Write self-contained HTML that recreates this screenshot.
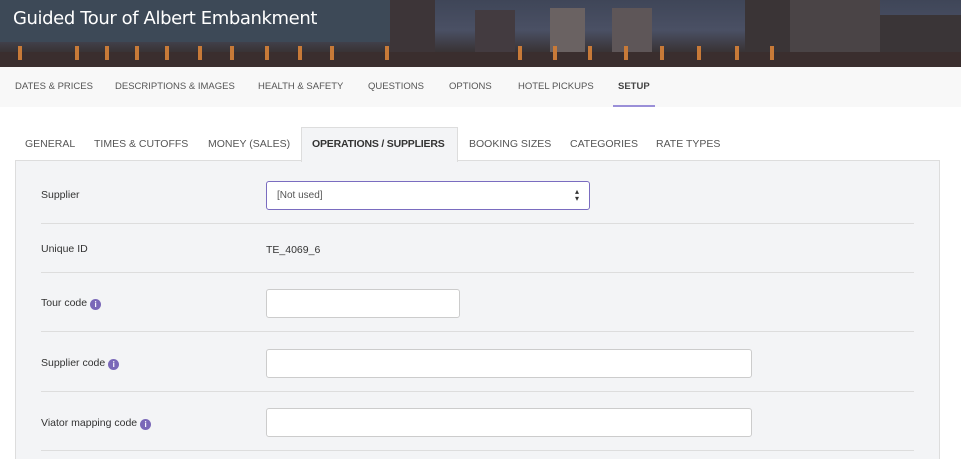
<!DOCTYPE html>
<html style="overflow:hidden;height:459px"><head><style>
*{margin:0;padding:0;box-sizing:border-box}
body{width:961px;height:459px;overflow:hidden;background:#fff;font-family:"Liberation Sans",sans-serif;position:relative}
.banner{position:absolute;left:0;top:0;width:961px;height:67px;background:linear-gradient(180deg,#3f4658 0%,#4a5064 45%,#3a3538 75%,#2c2426 100%)}
.bld{position:absolute;background:#4a4448}
.lamp{position:absolute;width:4px;height:14px;background:#c87a38;top:46px}
.title{position:absolute;left:0;top:0;width:390px;height:42px;background:#3d4957;color:#fff;font-size:18px;padding:8px 0 0 13px;font-family:"DejaVu Sans","Liberation Sans",sans-serif;letter-spacing:-0.4px}
.nav{position:absolute;top:67px;left:0;width:961px;height:40px;background:#f8f8f8;font-size:9.5px;color:#555}
.nav span{position:absolute;top:14px}
.sub{position:absolute;font-size:10.5px;color:#555}
.panel{position:absolute;left:15px;top:160px;width:925px;height:299px;background:#f3f4f6;border:1px solid #ddd;border-bottom:none}
.lbl{position:absolute;left:41px;font-size:10.5px;color:#333}
.line{position:absolute;left:41px;width:873px;height:1px;background:#ddd}
.inp{position:absolute;background:#fff;border:1px solid #ccc;border-radius:3px}
.i{display:inline-block;width:11px;height:11px;border-radius:50%;background:#7a68b8;color:#fff;font-size:8px;font-weight:bold;text-align:center;line-height:11px;vertical-align:-1px;margin-left:3px}
</style></head><body>
<div class="banner">
<div class="bld" style="left:390px;top:0;width:45px;height:67px;background:#3d3538"></div>
<div class="bld" style="left:475px;top:10px;width:40px;height:57px;background:#433b40"></div>
<div class="bld" style="left:550px;top:8px;width:35px;height:59px;background:#6a6262"></div>
<div class="bld" style="left:612px;top:8px;width:40px;height:59px;background:#5e5658"></div>
<div class="bld" style="left:745px;top:0;width:45px;height:67px;background:#3a3436"></div>
<div class="bld" style="left:790px;top:0;width:90px;height:67px;background:#4a4446"></div>
<div class="bld" style="left:880px;top:15px;width:81px;height:52px;background:#3a3537"></div>
<div style="position:absolute;left:0;top:52px;width:961px;height:15px;background:#3a2e2e"></div>
<div class="lamp" style="left:18px"></div><div class="lamp" style="left:75px"></div><div class="lamp" style="left:105px"></div><div class="lamp" style="left:135px"></div><div class="lamp" style="left:165px"></div><div class="lamp" style="left:198px"></div><div class="lamp" style="left:230px"></div><div class="lamp" style="left:265px"></div><div class="lamp" style="left:298px"></div><div class="lamp" style="left:330px"></div><div class="lamp" style="left:385px"></div><div class="lamp" style="left:518px"></div><div class="lamp" style="left:553px"></div><div class="lamp" style="left:588px"></div><div class="lamp" style="left:624px"></div><div class="lamp" style="left:660px"></div><div class="lamp" style="left:697px"></div><div class="lamp" style="left:735px"></div><div class="lamp" style="left:770px"></div>
</div>
<div class="title">Guided Tour of Albert Embankment</div>
<div class="nav">
<span style="left:15px">DATES &amp; PRICES</span>
<span style="left:115px">DESCRIPTIONS &amp; IMAGES</span>
<span style="left:258px">HEALTH &amp; SAFETY</span>
<span style="left:368px">QUESTIONS</span>
<span style="left:449px">OPTIONS</span>
<span style="left:518px">HOTEL PICKUPS</span>
<span style="left:618px;font-weight:bold;color:#444">SETUP</span>
<div style="position:absolute;left:613px;top:38px;width:42px;height:2px;background:#9a8fd8"></div>
</div>
<div class="sub" style="left:25px;top:138px">GENERAL</div>
<div class="sub" style="left:94px;top:138px">TIMES &amp; CUTOFFS</div>
<div class="sub" style="left:208px;top:138px">MONEY (SALES)</div>
<div style="position:absolute;left:301px;top:127px;width:157px;height:35px;background:#f3f4f6;border:1px solid #ddd;border-bottom:none;z-index:2;font-size:10.5px;font-weight:bold;color:#333;padding:10px 0 0 10px;letter-spacing:-0.2px">OPERATIONS / SUPPLIERS</div>
<div class="sub" style="left:469px;top:138px">BOOKING SIZES</div>
<div class="sub" style="left:570px;top:138px">CATEGORIES</div>
<div class="sub" style="left:656px;top:138px">RATE TYPES</div>
<div class="panel"></div>
<div class="lbl" style="top:189px">Supplier</div>
<div class="inp" style="left:266px;top:181px;width:324px;height:29px;border-color:#7a6cc0;font-size:10px;color:#555;padding:8px 0 0 10px">[Not used]<span style="position:absolute;right:10px;top:6px;font-size:8px;color:#333;line-height:7px">▴<br>▾</span></div>
<div class="line" style="top:223px"></div>
<div class="lbl" style="top:243px">Unique ID</div>
<div class="lbl" style="left:266px;top:244px">TE_4069_6</div>
<div class="line" style="top:272px"></div>
<div class="lbl" style="top:297px">Tour code<span class="i">i</span></div>
<div class="inp" style="left:266px;top:289px;width:194px;height:29px"></div>
<div class="line" style="top:331px"></div>
<div class="lbl" style="top:357px">Supplier code<span class="i">i</span></div>
<div class="inp" style="left:266px;top:349px;width:486px;height:29px"></div>
<div class="line" style="top:391px"></div>
<div class="lbl" style="top:417px">Viator mapping code<span class="i">i</span></div>
<div class="inp" style="left:266px;top:408px;width:486px;height:29px"></div>
<div class="line" style="top:450px"></div>
</body></html>
